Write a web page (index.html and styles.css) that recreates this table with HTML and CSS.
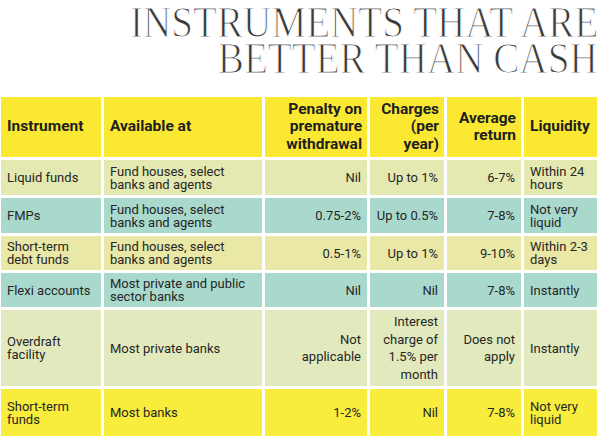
FILE: index.html
```html
<!DOCTYPE html>
<html>
<head>
<meta charset="utf-8">
<link rel="stylesheet" href="styles.css">
</head>
<body>
<div class="page">
  <h1 class="title">
    <span class="line">INSTRUMENTS THAT ARE</span>
    <span class="line">BETTER THAN CASH</span>
  </h1>
  <div class="table">
    <div class="row head">
      <div class="c l">Instrument</div>
      <div class="c l">Available at</div>
      <div class="c r">Penalty on premature withdrawal</div>
      <div class="c r">Charges (per year)</div>
      <div class="c r">Average return</div>
      <div class="c l">Liquidity</div>
    </div>
    <div class="row r1 green">
      <div class="c l">Liquid funds</div>
      <div class="c l">Fund houses, select banks and agents</div>
      <div class="c r">Nil</div>
      <div class="c r">Up to 1%</div>
      <div class="c r">6-7%</div>
      <div class="c l">Within 24 hours</div>
    </div>
    <div class="row r2 teal">
      <div class="c l">FMPs</div>
      <div class="c l">Fund houses, select banks and agents</div>
      <div class="c r">0.75-2%</div>
      <div class="c r">Up to 0.5%</div>
      <div class="c r">7-8%</div>
      <div class="c l">Not very liquid</div>
    </div>
    <div class="row r3 cream">
      <div class="c l">Short-term debt funds</div>
      <div class="c l">Fund houses, select banks and agents</div>
      <div class="c r">0.5-1%</div>
      <div class="c r">Up to 1%</div>
      <div class="c r">9-10%</div>
      <div class="c l">Within 2-3 days</div>
    </div>
    <div class="row r4 teal">
      <div class="c l">Flexi accounts</div>
      <div class="c l">Most private and public sector banks</div>
      <div class="c r">Nil</div>
      <div class="c r">Nil</div>
      <div class="c r">7-8%</div>
      <div class="c l">Instantly</div>
    </div>
    <div class="row r5 pale">
      <div class="c l">Overdraft facility</div>
      <div class="c l">Most private banks</div>
      <div class="c r">Not<br>applicable</div>
      <div class="c r">Interest charge of 1.5% per month</div>
      <div class="c r">Does not<br>apply</div>
      <div class="c l">Instantly</div>
    </div>
    <div class="row r6 yellow">
      <div class="c l">Short-term funds</div>
      <div class="c l">Most banks</div>
      <div class="c r">1-2%</div>
      <div class="c r">Nil</div>
      <div class="c r">7-8%</div>
      <div class="c l">Not very liquid</div>
    </div>
  </div>
</div>
</body>
</html>
```

FILE: styles.css
```css
html, body {
  margin: 0;
  padding: 0;
  background: #ffffff;
}
.page {
  width: 600px;
  height: 438px;
  overflow: hidden;
  background: #ffffff;
}
.title {
  margin: 0;
  height: 97px;
  padding-right: 2px;
  display: flex;
  flex-direction: column;
  align-items: flex-end;
  font-family: "Liberation Serif", serif;
  font-weight: 400;
  font-size: 45px;
  line-height: 36px;
  color: #3a3a3a;
  -webkit-text-stroke: 1.2px #ffffff;
  box-sizing: border-box;
  padding-top: 4px;
}
.line {
  display: block;
  white-space: nowrap;
  transform: scaleX(0.87);
  transform-origin: right center;
}
.table {
  display: flex;
  flex-direction: column;
  gap: 3px;
  padding-left: 1px;
  font-family: Roboto, "Liberation Sans", sans-serif;
  font-size: 13px;
  line-height: 13px;
  color: #262626;
}
.row {
  display: grid;
  grid-template-columns: 100px 158px 102px 74px 74px 73px;
  column-gap: 3px;
}
.c {
  display: flex;
  flex-direction: column;
  justify-content: center;
  box-sizing: border-box;
}
.c.l { padding-left: 6px; padding-right: 4px; text-align: left; }
.c.r { padding-right: 6px; padding-left: 4px; text-align: right; }
.head { height: 60px; }
.head .c {
  background: #fbe832;
  font-weight: 700;
  font-size: 15.5px;
  line-height: 17.5px;
  color: #1e1e1e;
}
.head .c.r { padding-right: 5px; padding-left: 2px; }
.r1 { height: 35px; }
.r2 { height: 35px; }
.r3 { height: 34px; }
.r4 { height: 34px; }
.r5 { height: 76px; }
.r6 { height: 47px; }
.green .c { background: #e4e9b1; }
.teal .c { background: #a9d9cd; }
.cream .c { background: #e9e8a6; }
.pale .c { background: #e2eabd; }
.yellow .c { background: #f8ed3c; }
.r5 .c.r { line-height: 17.5px; }
```
